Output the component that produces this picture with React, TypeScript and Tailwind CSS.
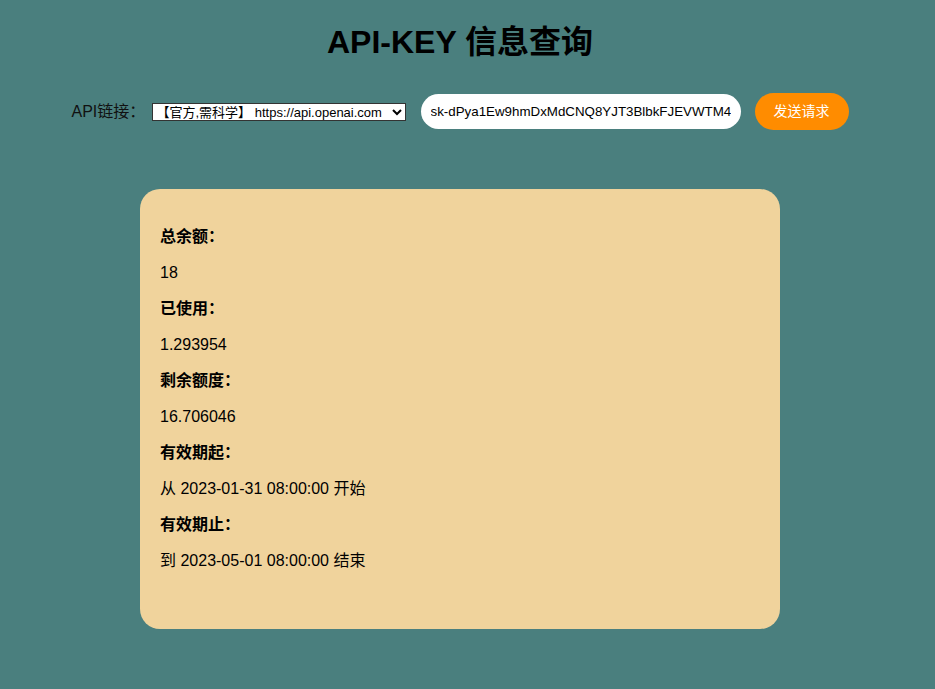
import { useState } from 'react';

const apiOptions = [
  '【官方,需科学】 https://api.openai.com',
  '【代理】 https://openai.proxy.example',
];

const rows = [
  { label: '总余额：', value: '18' },
  { label: '已使用：', value: '1.293954' },
  { label: '剩余额度：', value: '16.706046' },
  { label: '有效期起：', value: '从 2023-01-31 08:00:00 开始' },
  { label: '有效期止：', value: '到 2023-05-01 08:00:00 结束' },
];

export default function App() {
  const [api, setApi] = useState(apiOptions[0]);
  const [key, setKey] = useState('sk-dPya1Ew9hmDxMdCNQ8YJT3BlbkFJEVWTM4');

  return (
    <div
      className="min-h-[689px] bg-[#4a7f7e] pr-[15px] text-black"
      style={{ fontFamily: '"Liberation Sans", Arial, "Noto Sans CJK SC", sans-serif' }}
    >
      <h1 className="pt-[24px] text-center text-[32px] leading-[37px] font-bold">
        API-KEY 信息查询
      </h1>

      {/* Query bar */}
      <div className="mt-[32px] flex items-center justify-center">
        <label className="mr-[5px] w-[75px] text-[16px] leading-5 text-[#111]">API链接：</label>
        <select
          value={api}
          onChange={(e) => setApi(e.target.value)}
          className="h-[18px] w-[254px] border border-[#333] bg-white text-[13px] leading-4 text-black"
        >
          {apiOptions.map((o) => (
            <option key={o} value={o}>
              {o}
            </option>
          ))}
        </select>
        <input
          value={key}
          onChange={(e) => setKey(e.target.value)}
          className="ml-[15px] h-[35px] w-[320px] rounded-full bg-white px-[10px] text-[13.333px] text-black outline-none"
        />
        <button className="ml-[14px] h-[37px] w-[94px] rounded-full bg-[#ff8c00] text-[14px] text-white">
          发送请求
        </button>
      </div>

      {/* Result card */}
      <div className="mx-auto mt-[59px] h-[440px] w-[640px] rounded-[20px] bg-[#f0d39c] px-5 pt-[38px]">
        <div className="flex flex-col gap-4 text-[16px] leading-5">
          {rows.map((r) => (
            <div key={r.label} className="flex flex-col gap-4">
              <div className="font-bold">{r.label}</div>
              <div>{r.value}</div>
            </div>
          ))}
        </div>
      </div>
    </div>
  );
}
